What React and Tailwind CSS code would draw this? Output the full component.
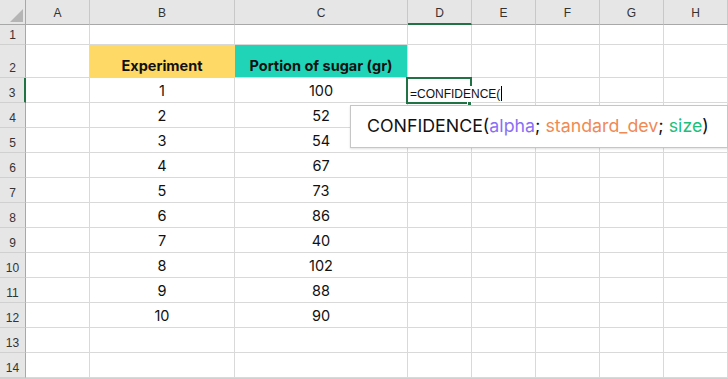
import React from "react";

const cols = ["A", "B", "C", "D", "E", "F", "G", "H"];
const exp = [1, 2, 3, 4, 5, 6, 7, 8, 9, 10];
const sugar = [100, 52, 54, 67, 73, 86, 40, 102, 88, 90];

const hdrFont = { fontFamily: '"Liberation Sans", Arial, sans-serif' };
const cellFont = { fontFamily: 'Inter, "Noto Sans", sans-serif' };

function RowHeader({ n, selected }) {
  return (
    <div
      className={`flex items-end justify-center pb-[3px] bg-[#e6e6e6] border-b border-[#d0d0d0] text-[12px] leading-[12px] text-[#333] ${
        selected ? "border-r-2 border-r-[#217346]" : "border-r border-r-[#a8a8a8]"
      }`}
      style={hdrFont}
    >
      {n}
    </div>
  );
}

function Cell({ children, className = "" }) {
  return (
    <div
      className={`flex items-end justify-center pb-[4px] border-r border-b border-[#d9d9d9] text-[14.5px] leading-[14px] text-[#111] ${className}`}
      style={cellFont}
    >
      {children}
    </div>
  );
}

export default function App() {
  const rows = [];
  for (let r = 1; r <= 14; r++) {
    const cells = [];
    cells.push(<RowHeader key="h" n={r} selected={r === 3} />);
    for (let c = 0; c < 8; c++) {
      let content = null;
      let cls = "";
      if (r === 2 && c === 1) {
        content = "Experiment";
        cls = "bg-[#ffd966] border-[#ffd966] font-bold items-center pb-0";
      } else if (r === 2 && c === 2) {
        content = "Portion of sugar (gr)";
        cls = "bg-[#20d5b7] border-[#20d5b7] font-bold items-center pb-0";
      } else if (r >= 3 && r <= 12 && c === 1) {
        content = exp[r - 3];
      } else if (r >= 3 && r <= 12 && c === 2) {
        content = sugar[r - 3];
      }
      cells.push(
        <Cell key={c} className={cls}>
          {content}
        </Cell>
      );
    }
    rows.push(...cells);
  }

  return (
    <div className="relative w-[728px] h-[379px] overflow-hidden bg-white border-b border-[#d0d0d0]">
      <div className="grid grid-cols-[26px_64px_145px_173px_64px_64px_64px_64px_64px] grid-rows-[25px_20px_33px_repeat(12,25px)]">
        {/* corner */}
        <div className="relative bg-[#e6e6e6] border-r border-b border-[#a8a8a8]">
          <svg className="absolute left-[10px] top-[9px]" width="13" height="13" viewBox="0 0 13 13">
            <polygon points="13,0 13,13 0,13" fill="#b5b5b5" />
          </svg>
        </div>
        {cols.map((c) => (
          <div
            key={c}
            className={`flex items-center justify-center bg-[#e6e6e6] border-r border-r-[#c8c8c8] text-[12px] leading-[12px] pt-[2px] text-[#333] ${
              c === "D" ? "border-b-2 border-b-[#217346]" : "border-b border-b-[#a8a8a8]"
            }`}
            style={hdrFont}
          >
            {c}
          </div>
        ))}
        {rows}
      </div>

      {/* selected cell D3 */}
      <div className="absolute left-[406px] top-[77px] w-[66px] h-[27px] border-2 border-[#217346]" />
      <div className="absolute left-[467px] top-[101px] w-[5px] h-[5px] bg-[#217346] border border-white" />
      <div
        className="absolute left-[410px] top-[86px] flex items-center text-[12px] leading-[14px] text-[#111] bg-white pr-[1px]"
        style={hdrFont}
      >
        =CONFIDENCE(
        <span className="inline-block w-px h-[15px] bg-black ml-[1px]" />
      </div>

      {/* tooltip */}
      <div
        className="absolute left-[350px] top-[105px] w-[378px] h-[43px] bg-white border border-[#c6c6c6] shadow-[0_1px_2px_rgba(0,0,0,0.12)] flex items-center pl-[16px] text-[17.8px] text-[#111]"
        style={cellFont}
      >
        <span>CONFIDENCE(</span>
        <span className="text-[#8a6ff5]">alpha</span>
        <span>;&nbsp;</span>
        <span className="text-[#f08a55]">standard_dev</span>
        <span>;&nbsp;</span>
        <span className="text-[#1cc07a]">size</span>
        <span>)</span>
      </div>
    </div>
  );
}
